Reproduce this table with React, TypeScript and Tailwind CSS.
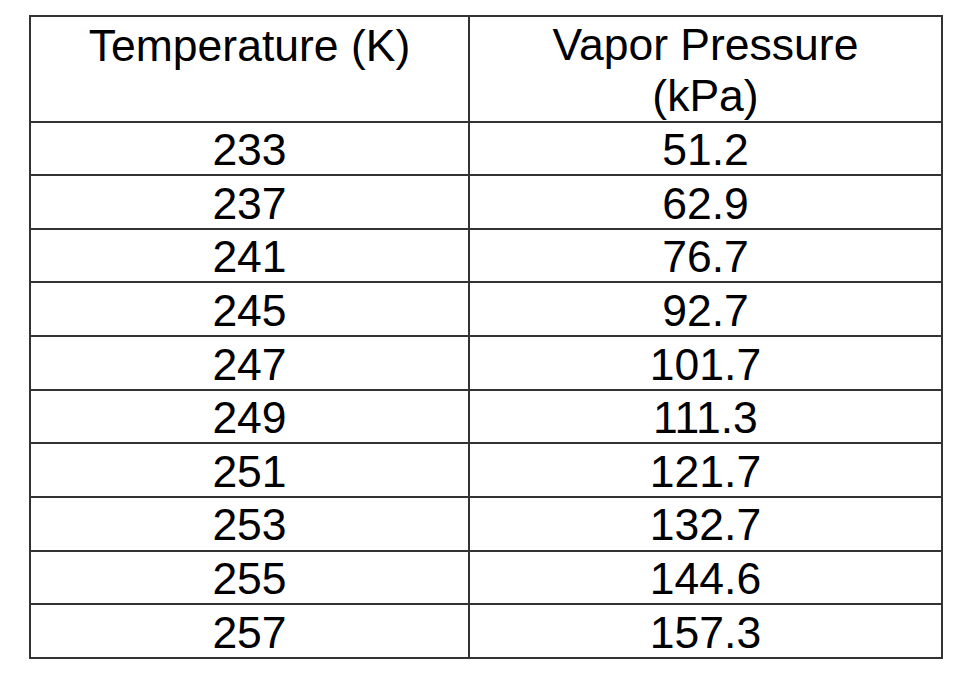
import React from "react";

const rows: [string, string][] = [
  ["233", "51.2"],
  ["237", "62.9"],
  ["241", "76.7"],
  ["245", "92.7"],
  ["247", "101.7"],
  ["249", "111.3"],
  ["251", "121.7"],
  ["253", "132.7"],
  ["255", "144.6"],
  ["257", "157.3"],
];

export default function App() {
  return (
    <div className="w-[966px] h-[674px] bg-white pt-[15px] pl-[29px] font-['Liberation_Sans',Arial,sans-serif] text-[44.5px] text-black">
      <div className="w-[914px] border-2 border-[#333]">
        <div className="flex h-[105.5px] border-b-2 border-[#333] leading-[51px]">
          <div className="w-[439px] border-r-2 border-[#333] text-center pt-[2.5px]">
            Temperature (K)
          </div>
          <div className="flex-1 text-center pt-[2px]">
            Vapor Pressure
            <br />
            (kPa)
          </div>
        </div>
        {rows.map(([t, p], i) => (
          <div
            key={t}
            className={
              i < rows.length - 1
                ? "flex h-[53.65px] border-b-2 border-[#333] leading-[51px]"
                : "flex h-[51.65px] leading-[51px]"
            }
          >
            <div className="w-[439px] border-r-2 border-[#333] text-center pt-[1.5px]">
              {t}
            </div>
            <div className="flex-1 text-center pt-[1.5px]">{p}</div>
          </div>
        ))}
      </div>
    </div>
  );
}
